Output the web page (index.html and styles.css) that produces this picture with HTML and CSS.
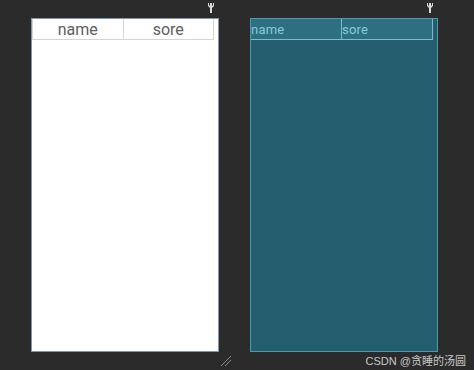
FILE: index.html
```html
<!DOCTYPE html>
<html lang="zh">
<head>
  <meta charset="UTF-8" />
  <title>布局预览</title>
  <link rel="stylesheet" href="styles.css">
</head>
<body>
  <div class="canvas">
    <div class="preview">
      <svg class="pin" width="8" height="10" viewBox="0 0 8 10"><path d="M1 0v3l2 2v5h2V5l2-2V0H6v2.5H5V0H3v2.5H2V0z" fill="#d8d8d8"/></svg>
      <div class="screen light">
        <div class="row">
          <div class="cell">name</div>
          <div class="cell">sore</div>
        </div>
      </div>
      <svg class="grip" width="12" height="12" viewBox="0 0 12 12"><path d="M1 11L11 1M5 11L11 5" stroke="#8a8a8a" stroke-width="1"/></svg>
    </div>
    <div class="preview">
      <svg class="pin" width="8" height="10" viewBox="0 0 8 10"><path d="M1 0v3l2 2v5h2V5l2-2V0H6v2.5H5V0H3v2.5H2V0z" fill="#d8d8d8"/></svg>
      <div class="screen blue">
        <div class="row">
          <div class="cell">name</div>
          <div class="cell">sore</div>
        </div>
      </div>
    </div>
  </div>
  <div class="mark">CSDN @贪睡的汤圆</div>
</body>
</html>
```
FILE: styles.css
```css
* { box-sizing: border-box; }
body {
  margin: 0;
  background: #2b2b2b;
  width: 474px;
  height: 370px;
  overflow: hidden;
  font-family: Roboto, "Noto Sans CJK SC", sans-serif;
  position: relative;
}
.canvas {
  display: flex;
  gap: 31px;
  padding: 18px 0 0 31px;
}
.preview {
  position: relative;
}
.pin {
  position: absolute;
  top: -15px;
  right: 4px;
}
.grip {
  position: absolute;
  right: -13px;
  bottom: -15px;
}
.screen {
  width: 188px;
  height: 334px;
  border: 1px solid;
  padding-right: 4px;
}
.row {
  display: flex;
  height: 21px;
}
.cell {
  flex: 1;
  line-height: 21px;
}
.light {
  background: #fff;
  border-color: #7d98b0;
}
.light .row {
  border: 1px solid #d4d4d4;
  border-top: none;
}
.light .cell {
  text-align: center;
  color: #5e5e5e;
  font-size: 16px;
}
.light .cell + .cell {
  border-left: 1px solid #d4d4d4;
}
.blue {
  background: #245d6e;
  border-color: #4f99ab;
}
.blue .row {
  background: #2e7082;
  border: 1px solid #7cbccb;
  border-top: none;
  border-left: none;
}
.blue .cell {
  color: #86cadb;
  font-size: 13px;
  line-height: 22px;
  letter-spacing: 0.2px;
}
.blue .cell + .cell {
  border-left: 1px solid #7cbccb;
}
.mark {
  position: absolute;
  right: 8px;
  top: 352px;
  font-size: 11px;
  white-space: nowrap;
  color: #c8c8c8;
  font-family: "Liberation Sans", "Noto Sans CJK SC", sans-serif;
}
```
